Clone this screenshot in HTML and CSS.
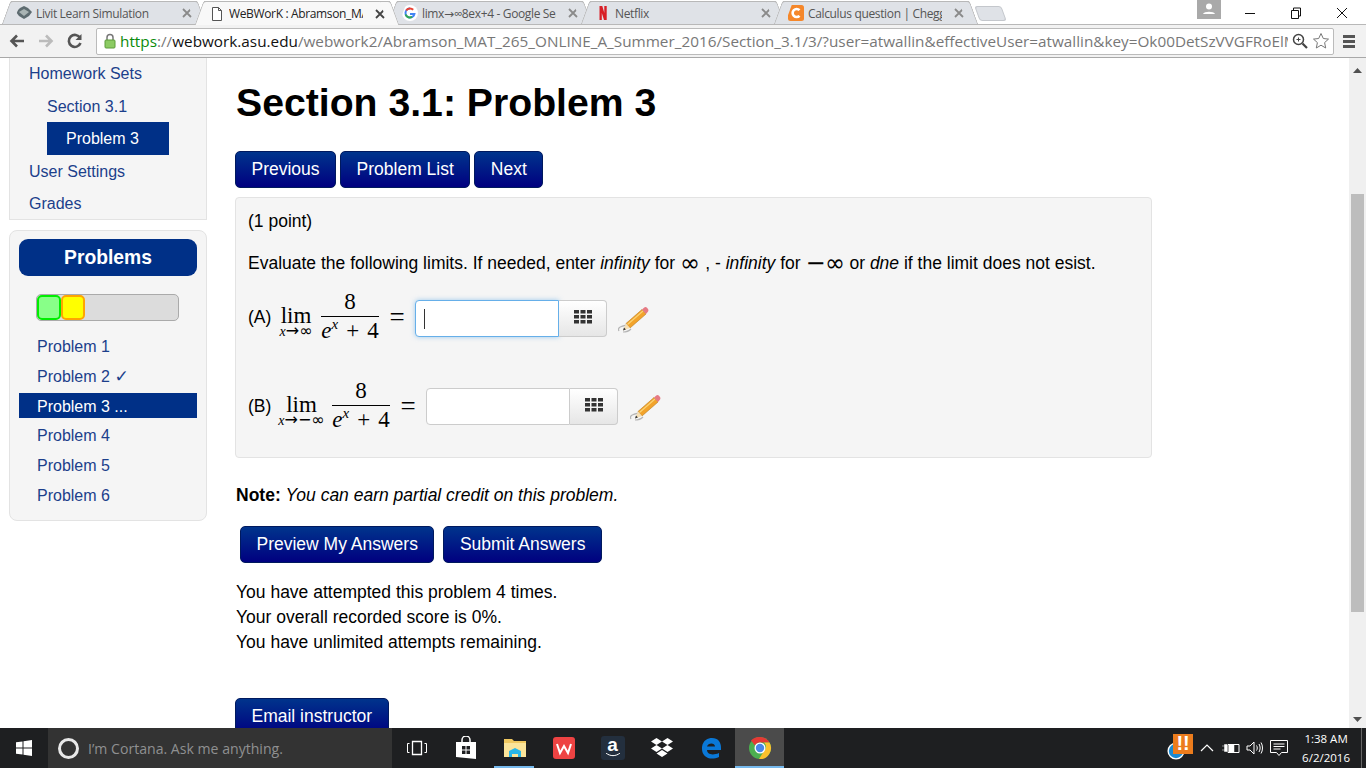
FILE: index.html
```html
<!DOCTYPE html>
<html>
<head>
  <meta charset="UTF-8">
  <title>WeBWorK : Abramson_MAT_265</title>
  <link rel="stylesheet" href="styles.css">
</head>
<body>
  <div class="tabbar">
    <div class="tab">
      <svg class="favicon" viewBox="0 0 16 16"><path d="M0 7l4-4 4-2 4 2 4 4-3 4-5 3-5-3z" fill="#5d6b70"/><path d="M3 7l5-3 5 3-5 4z" fill="#a9b4b4"/></svg>
      <span class="tab-title">Livit Learn Simulation</span><svg class="tab-x" viewBox="0 0 10 10"><path d="M1 1l8 8M9 1L1 9" stroke="#8a8a8a" stroke-width="1.800"/></svg>
    </div>
    <div class="tab tab-active">
      <svg class="favicon" viewBox="0 0 16 16"><path d="M3.500 1.500h6l3 3v10h-9z" fill="#fff" stroke="#555"/><path d="M9.500 1.500v3h3" fill="none" stroke="#555"/></svg>
      <span class="tab-title">WeBWorK : Abramson_MAT_265</span><svg class="tab-x" viewBox="0 0 10 10"><path d="M1 1l8 8M9 1L1 9" stroke="#444" stroke-width="1.800"/></svg>
    </div>
    <div class="tab">
      <svg class="favicon" viewBox="0 0 16 16"><circle cx="8" cy="8" r="8" fill="#fff"/><path d="M8 3.500a4.500 4.500 0 1 0 4.400 5.500H8" fill="none" stroke="#4285f4" stroke-width="2"/><path d="M4.200 5.500A4.500 4.500 0 0 1 11.200 4.800" fill="none" stroke="#ea4335" stroke-width="2"/><path d="M3.600 9.500a4.500 4.500 0 0 0 6.500 2.400" fill="none" stroke="#34a853" stroke-width="2"/></svg>
      <span class="tab-title">limx→∞8ex+4 - Google Search</span><svg class="tab-x" viewBox="0 0 10 10"><path d="M1 1l8 8M9 1L1 9" stroke="#8a8a8a" stroke-width="1.800"/></svg>
    </div>
    <div class="tab">
      <svg class="favicon" viewBox="0 0 16 16"><path d="M4.500 1h2.800l2 7V1h2.400v14H9l-2.200-7v7H4.500z" fill="#d81f26"/></svg>
      <span class="tab-title">Netflix</span><svg class="tab-x" viewBox="0 0 10 10"><path d="M1 1l8 8M9 1L1 9" stroke="#8a8a8a" stroke-width="1.800"/></svg>
    </div>
    <div class="tab">
      <svg class="favicon" viewBox="0 0 16 16"><rect width="16" height="16" rx="2.500" fill="#f5872a"/><path d="M11.500 5.200A4 4 0 1 0 11.500 10.800" fill="none" stroke="#fff" stroke-width="2.600"/></svg>
      <span class="tab-title">Calculus question | Chegg.com</span><svg class="tab-x" viewBox="0 0 10 10"><path d="M1 1l8 8M9 1L1 9" stroke="#8a8a8a" stroke-width="1.800"/></svg>
    </div>
    <div class="tab-new"></div>
    <div class="win-controls">
      <div class="profile"><svg viewBox="0 0 18 18" width="18" height="18"><circle cx="9" cy="5.500" r="3" fill="#fff"/><path d="M3 13c1-3 11-3 12 0z" fill="#fff"/></svg></div>
      <svg class="win-btn" viewBox="0 0 46 20"><path d="M18 10.500h10" stroke="#111"/></svg>
      <svg class="win-btn" viewBox="0 0 46 20"><path d="M18.500 7.500h7v8h-7zM20.500 7.500v-2.500h7v8h-2" fill="none" stroke="#111"/></svg>
      <svg class="win-btn" viewBox="0 0 46 20"><path d="M18 5l10 10M28 5L18 15" stroke="#111"/></svg>
    </div>
  </div>

  <div class="toolbar">
    <svg class="nav-icon" viewBox="0 0 18 18"><path d="M16 9H4M9 3.500L3.500 9 9 14.500" fill="none" stroke="#555" stroke-width="2.600"/></svg>
    <svg class="nav-icon" viewBox="0 0 18 18"><path d="M2 9h12M9 3.500L14.500 9 9 14.500" fill="none" stroke="#bbb" stroke-width="2.600"/></svg>
    <svg class="nav-icon" viewBox="0 0 18 18"><path d="M14.500 11a6 6 0 1 1-.4-5" fill="none" stroke="#555" stroke-width="2.600"/><path d="M15.500 2v6h-6z" fill="#555"/></svg>
    <div class="omnibox">
      <svg class="lock" viewBox="0 0 12 16"><path d="M3 7V4.500a3 3 0 0 1 6 0V7" fill="none" stroke="#777" stroke-width="1.500"/><rect x="1" y="7" width="10" height="8" rx="1" fill="#8ccb63" stroke="#5c9c3a"/></svg>
      <div class="url"><span class="url-https">https</span><span class="url-dim">://</span><span class="url-host">webwork.asu.edu</span><span class="url-dim">/webwork2/Abramson_MAT_265_ONLINE_A_Summer_2016/Section_3.1/3/?user=atwallin&amp;effectiveUser=atwallin&amp;key=Ok00DetSzVVGFRoElMnPq</span></div>
      <svg class="omni-icon" viewBox="0 0 18 18"><circle cx="7.500" cy="7.500" r="5" fill="none" stroke="#444" stroke-width="1.500"/><path d="M11.500 11.500L16 16" stroke="#444" stroke-width="2.200"/><path d="M5.500 7.500h4M7.500 5.500v4" stroke="#444"/></svg>
      <svg class="omni-icon" viewBox="0 0 18 18"><path d="M9 1.500l2.300 5 5.200.6-3.900 3.500 1.100 5.400L9 13.200 4.300 16l1.100-5.400L1.500 7.100l5.200-.6z" fill="none" stroke="#777"/></svg>
    </div>
    <div class="menu-icon"><i></i><i></i><i></i></div>
  </div>

  <div class="viewport">
    <div class="page">
      <div class="sidebar">
        <ul class="site-nav">
          <li><a>Homework Sets</a></li>
          <li class="sub"><a>Section 3.1</a></li>
          <li class="sub current"><a>Problem 3</a></li>
          <li><a>User Settings</a></li>
          <li><a>Grades</a></li>
        </ul>
        <div class="problems">
          <div class="problems-title">Problems</div>
          <div class="progress"><div class="seg seg-green"></div><div class="seg seg-yellow"></div></div>
          <ul class="problem-list">
            <li>Problem 1</li>
            <li>Problem 2 <span class="check">✓</span></li>
            <li class="active">Problem 3 ...</li>
            <li>Problem 4</li>
            <li>Problem 5</li>
            <li>Problem 6</li>
          </ul>
        </div>
      </div>

      <div class="content">
        <h1>Section 3.1: Problem 3</h1>
        <div class="btn-row">
          <a class="btn">Previous</a>
          <a class="btn">Problem List</a>
          <a class="btn">Next</a>
        </div>
        <div class="well">
          <p class="point">(1 point)</p>
          <p class="intro">Evaluate the following limits. If needed, enter <em>infinity</em> for <span class="sym sym-one">∞</span> , - <em>infinity</em> for <span class="sym">−∞</span> or <em>dne</em> if the limit does not esist.</p>
          <div class="eq eq-a">
            <span class="eq-label">(A)</span>
            <span class="lim"><span class="lim-top">lim</span><span class="lim-sub"><i>x</i><span class="sub-sym">→∞</span></span></span>
            <span class="frac"><span class="num">8</span><span class="den"><i>e</i><sup><i>x</i></sup><span class="plus">+</span>4</span></span>
            <span class="equals">=</span>
            <span class="answer focused"><span class="input"><span class="caret"></span></span><span class="keypad"><svg viewBox="0 0 18 14" width="18" height="14"><path d="M0 0h5v3.500H0zM6.500 0h5v3.500h-5zM13 0h5v3.500h-5zM0 5h5v3.500H0zM6.500 5h5v3.500h-5zM13 5h5v3.500h-5zM0 10h5v3.500H0zM6.500 10h5v3.500h-5zM13 10h5v3.500h-5z" fill="#333"/></svg></span></span>
            <svg class="pencil" viewBox="0 0 31 28"><path d="M1 26c-2-3 2-5 7-6M2 22c5-2 9-2 13-4M5 27c3 0 6-1 8-3" fill="none" stroke="#b5b5b5" stroke-width="1.200"/><path d="M8 18.500L24 4.500l4 4.500L12 23z" fill="#f2a32b" stroke="#b97a1c" stroke-width=".6"/><path d="M9.500 19.500L25 6" stroke="#fbd373" stroke-width="1.200"/><path d="M24 4.500l2-1.800c1-.9 2.300-.7 3 .1l1 1.200c.7.800.6 2.100-.3 3L28 9z" fill="#e67a84"/><path d="M8 18.500l4 4.500-7 2.500z" fill="#f6dfb5"/><path d="M5 25.500l1-3 1.900 2z" fill="#333"/></svg>
          </div>
          <div class="eq eq-b">
            <span class="eq-label">(B)</span>
            <span class="lim lim-wide"><span class="lim-top">lim</span><span class="lim-sub"><i>x</i><span class="sub-sym">→−∞</span></span></span>
            <span class="frac"><span class="num">8</span><span class="den"><i>e</i><sup><i>x</i></sup><span class="plus">+</span>4</span></span>
            <span class="equals">=</span>
            <span class="answer"><span class="input"></span><span class="keypad"><svg viewBox="0 0 18 14" width="18" height="14"><path d="M0 0h5v3.500H0zM6.500 0h5v3.500h-5zM13 0h5v3.500h-5zM0 5h5v3.500H0zM6.500 5h5v3.500h-5zM13 5h5v3.500h-5zM0 10h5v3.500H0zM6.500 10h5v3.500h-5zM13 10h5v3.500h-5z" fill="#333"/></svg></span></span>
            <svg class="pencil" viewBox="0 0 31 28"><path d="M1 26c-2-3 2-5 7-6M2 22c5-2 9-2 13-4M5 27c3 0 6-1 8-3" fill="none" stroke="#b5b5b5" stroke-width="1.200"/><path d="M8 18.500L24 4.500l4 4.500L12 23z" fill="#f2a32b" stroke="#b97a1c" stroke-width=".6"/><path d="M9.500 19.500L25 6" stroke="#fbd373" stroke-width="1.200"/><path d="M24 4.500l2-1.800c1-.9 2.300-.7 3 .1l1 1.200c.7.800.6 2.100-.3 3L28 9z" fill="#e67a84"/><path d="M8 18.500l4 4.500-7 2.500z" fill="#f6dfb5"/><path d="M5 25.500l1-3 1.900 2z" fill="#333"/></svg>
          </div>
        </div>
        <p class="note"><b>Note:</b> <em>You can earn partial credit on this problem.</em></p>
        <div class="submit-row">
          <a class="btn btn-submit">Preview My Answers</a>
          <a class="btn btn-submit">Submit Answers</a>
        </div>
        <p class="attempts">You have attempted this problem 4 times.<br>Your overall recorded score is 0%.<br>You have unlimited attempts remaining.</p>
        <a class="btn btn-email">Email instructor</a>
      </div>
    </div>
    <div class="scrollbar">
      <div class="sb-arrow sb-up"><svg viewBox="0 0 9 5" width="9" height="5"><path d="M4.500 0L9 5H0z" fill="#505050"/></svg></div>
      <div class="sb-track"><div class="sb-thumb"></div></div>
      <div class="sb-arrow"><svg viewBox="0 0 9 5" width="9" height="5"><path d="M0 0h9L4.500 5z" fill="#505050"/></svg></div>
    </div>
  </div>

  <div class="taskbar">
    <div class="start"><svg viewBox="0 0 16 16" width="16" height="16"><path d="M0 2.300L6.500 1.400V7.500H0zM7.500 1.300L16 0v7.500H7.500zM0 8.500h6.500v6.100L0 13.700zM7.500 8.500H16V16l-8.500-1.300z" fill="#fff"/></svg></div>
    <div class="search"><span class="cortana"></span><span>I’m Cortana. Ask me anything.</span></div>
    <div class="task-icon"><svg viewBox="0 0 22 16" width="22" height="16"><path d="M6.500 1.500h9v13h-9z" fill="none" stroke="#fff" stroke-width="1.300"/><path d="M3.500 3.500h-2v9h2M18.500 3.500h2v9h-2" fill="none" stroke="#fff"/></svg></div>
    <div class="task-icon"><svg viewBox="0 0 22 24" width="22" height="24"><path d="M7 6V4a4 4 0 0 1 8 0v2" fill="none" stroke="#fff" stroke-width="1.500"/><path d="M1 6h20v17L1 21z" fill="#fff"/><path d="M7 10h3.500v3.500H7zM11.500 10H15v3.500h-3.500zM7 14.500h3.500V18H7zM11.500 14.500H15V18h-3.500z" fill="#1e1f21"/></svg></div>
    <div class="task-icon running"><svg viewBox="0 0 22 20" width="22" height="20"><path d="M0 1h8l2 2h12v16H0z" fill="#f0c860"/><path d="M0 5h22v14H0z" fill="#fbe49a"/><path d="M5 19v-6l6-3 6 3v6h-3v-3H8v3z" fill="#29b6e8"/></svg></div>
    <div class="task-icon"><svg viewBox="0 0 22 22" width="22" height="22"><rect width="22" height="22" rx="3" fill="#ee4343"/><path d="M4 7l3 9 4-7 4 7 3-9" fill="none" stroke="#fff" stroke-width="2"/></svg></div>
    <div class="task-icon"><div class="amazon">a<svg viewBox="0 0 16 4" width="16" height="4"><path d="M1 0c4 3.500 10 3.500 14 0" fill="none" stroke="#fff"/></svg></div></div>
    <div class="task-icon"><svg viewBox="0 0 24 22" width="24" height="22"><path d="M6.500 1L12 4.500 6.500 8 1 4.500zM17.500 1L23 4.500 17.500 8 12 4.500zM6.500 8L12 11.500 6.500 15 1 11.500zM17.500 8L23 11.500 17.500 15 12 11.500zM12 13l5.500 3.500L12 20l-5.500-3.500z" fill="#fff"/></svg></div>
    <div class="task-icon"><svg viewBox="0 0 22 22" width="22" height="22"><path d="M2 10C3 3 8 1 12 1c6 0 9 4 9 10v2H7c0 4 5 6 12 3v4c-9 4-17 0-17-8v-2zm5-.500h8c0-4-7-4-8 0z" fill="#0a78d7"/></svg></div>
    <div class="task-icon running active"><svg viewBox="0 0 24 24" width="24" height="24"><circle cx="12" cy="12" r="11" fill="#4caf50"/><path d="M12 1a11 11 0 0 1 9.500 5.500H12a5.500 5.500 0 0 0-5 3L3 4.500A11 11 0 0 1 12 1z" fill="#e53935"/><path d="M21.500 6.500A11 11 0 0 1 11 23l5-8a5.500 5.500 0 0 0 0-8.500z" fill="#fbc02d"/><circle cx="12" cy="12" r="5.500" fill="#fff"/><circle cx="12" cy="12" r="4.200" fill="#4a86e8"/></svg></div>
    <div class="tray">
      <div class="tray-alert">
        <svg viewBox="0 0 20 20" width="18" height="18"><circle cx="10" cy="10" r="9.500" fill="#fff"/><circle cx="10" cy="10" r="8" fill="#1a8ad4"/><circle cx="10" cy="10" r="2" fill="#fff"/></svg>
        <span class="alert-badge">!!</span>
      </div>
      <svg class="tray-chevron" viewBox="0 0 14 8" width="14" height="8"><path d="M1 7l6-6 6 6" fill="none" stroke="#fff" stroke-width="1.200"/></svg>
      <svg viewBox="0 0 18 12" width="18" height="12"><path d="M6 2.500h11v8H6z" fill="none" stroke="#fff"/><path d="M7 3h5v7H7zM0 4h3M0 8h3M2.500 2.500h2.500v7H2.500z" fill="#fff" stroke="#fff" stroke-width=".5"/></svg>
      <svg viewBox="0 0 17 14" width="17" height="14"><path d="M1 5h3l4-4v12L4 9H1z" fill="none" stroke="#fff"/><path d="M10.500 4.500c1 1.500 1 3.500 0 5M13 3c1.500 2.500 1.500 5.500 0 8M15 1.500c2 3 2 8 0 11" fill="none" stroke="#fff"/></svg>
      <svg viewBox="0 0 20 18" width="20" height="18"><path d="M1.500 1.500h17v12h-6l-2.500 3-2.500-3h-6z" fill="none" stroke="#fff"/><path d="M4.500 5h11M4.500 7.500h11M4.500 10h7" stroke="#fff"/></svg>
      <div class="clock"><div>1:38 AM</div><div>6/2/2016</div></div>
      <div class="show-desktop"></div>
    </div>
  </div>
</body>
</html>
```

FILE: styles.css
```css
* {
  box-sizing: border-box;
}
html, body {
  margin: 0;
  height: 100%;
  overflow: hidden;
}
body {
  display: flex;
  flex-direction: column;
  width: 1366px;
  height: 768px;
  font-family: "Liberation Sans", Arial, sans-serif;
  font-size: 17.500px;
  color: #000;
  background: #fff;
}
ul {
  list-style: none;
  margin: 0;
  padding: 0;
}

/* browser chrome */
.tabbar {
  display: flex;
  align-items: flex-end;
  height: 25px;
  flex: none;
  padding-left: 11px;
  background: #fff;
  border-bottom: 1px solid #b8b8b8;
}
.tab {
  position: relative;
  display: flex;
  align-items: center;
  gap: 4px;
  width: 186px;
  height: 23px;
  margin-right: 7px;
  padding: 0 3px 0 5px;
  font-family: "Open Sans", "DejaVu Sans", sans-serif;
  font-size: 12px;
  letter-spacing: -0.35px;
  color: #555;
  background: #dfe2e7;
  border-top: 1px solid #b8b8b8;
}
.tab::before, .tab::after {
  content: "";
  position: absolute;
  top: -1px;
  bottom: 0;
  width: 10px;
  background: inherit;
  border-top: 1px solid #b8b8b8;
}
.tab::before {
  left: -5px;
  transform: skewX(-20deg);
  border-left: 1px solid #b8b8b8;
  border-top-left-radius: 3px;
}
.tab::after {
  right: -5px;
  transform: skewX(20deg);
  border-right: 1px solid #b8b8b8;
  border-top-right-radius: 3px;
}
.tab-active {
  z-index: 2;
  height: 24px;
  margin-bottom: -1px;
  color: #222;
  background: #f8f8f8;
}
.favicon {
  width: 16px;
  height: 16px;
  flex: none;
}
.tab-title {
  flex: 1;
  min-width: 0;
  margin-right: 8px;
  overflow: hidden;
  white-space: nowrap;
}
.tab-x {
  flex: none;
  width: 10px;
  height: 10px;
  margin-right: 2px;
}
.tab-new {
  width: 27px;
  height: 15px;
  margin: 0 0 3px 1px;
  background: #dfe2e7;
  border: 1px solid #c4c7cc;
  border-radius: 3px;
  transform: skewX(20deg);
}
.win-controls {
  display: flex;
  align-self: flex-start;
  margin-left: auto;
  padding-right: 1px;
}
.profile {
  display: flex;
  align-items: center;
  justify-content: center;
  width: 24px;
  height: 19px;
  margin-right: 6px;
  background: #a9a9a9;
}
.win-btn {
  width: 46px;
  height: 26px;
}

.toolbar {
  display: flex;
  align-items: center;
  height: 33px;
  flex: none;
  padding: 0 8px;
  background: #f2f2f2;
  border-bottom: 1px solid #a8a8a8;
}
.nav-icon {
  width: 18px;
  height: 18px;
  margin-right: 11px;
}
.omnibox {
  display: flex;
  align-items: center;
  width: 1238px;
  height: 27px;
  margin-left: 1px;
  padding: 0 3px 0 7px;
  background: #fff;
  border: 1px solid #bbb;
  border-radius: 2px;
}
.lock {
  width: 12px;
  height: 16px;
  flex: none;
  margin-right: 4px;
}
.url {
  flex: 1;
  min-width: 0;
  overflow: hidden;
  white-space: nowrap;
  font-family: "Open Sans", sans-serif;
  font-size: 15.300px;
  color: #777;
}
.url-https {
  color: #0a8a0a;
}
.url-host {
  color: #111;
}
.omni-icon {
  width: 18px;
  height: 18px;
  flex: none;
  margin-left: 3px;
}
.menu-icon {
  display: flex;
  flex-direction: column;
  gap: 2px;
  width: 12px;
  margin-left: 9px;
}
.menu-icon i {
  height: 3px;
  background: #555;
}

/* page */
.viewport {
  display: flex;
  flex: 1;
  min-height: 0;
}
.page {
  display: flex;
  flex: 1;
  min-width: 0;
  padding-left: 9px;
  overflow: hidden;
}
.sidebar {
  width: 198px;
  flex: none;
  margin-right: 28px;
  font-size: 16px;
}
.site-nav {
  height: 162px;
  padding: 0 0 0 19px;
  background: #f5f5f5;
  border: 1px solid #e3e3e3;
  border-top: 0;
}
.site-nav li {
  height: 32px;
  line-height: 34px;
  color: #1c3f8b;
}
.site-nav li:first-child {
  line-height: 31px;
}
.site-nav .sub {
  margin-left: 18px;
}
.site-nav li.sub.current {
  width: 122px;
  height: 33px;
  padding-left: 19px;
  line-height: 33px;
  color: #fff;
  background: #003087;
}
.problems {
  height: 291px;
  margin-top: 10px;
  padding: 8px 9px;
  background: #f5f5f5;
  border: 1px solid #e3e3e3;
  border-radius: 8px;
}
.problems-title {
  height: 37px;
  line-height: 38px;
  text-align: center;
  font-size: 19.300px;
  font-weight: bold;
  color: #fff;
  background: #003087;
  border-radius: 9px;
}
.progress {
  display: flex;
  width: 143px;
  height: 27px;
  margin: 18px 0 0 17px;
  background: #dcdcdc;
  border: 1px solid #aaa;
  border-radius: 5px;
}
.seg {
  width: 24px;
  border-radius: 5px;
  border: 2px solid;
}
.seg-green {
  background: #88ff88;
  border-color: #00ee00;
}
.seg-yellow {
  background: #ffff00;
  border-color: #ffa500;
}
.problem-list {
  margin-top: 10px;
}
.problem-list li {
  height: 30px;
  line-height: 32px;
  padding-left: 18px;
  color: #1c3f8b;
}
.problem-list li.active {
  height: 25px;
  margin: 2px 0;
  line-height: 27px;
  color: #fff;
  background: #003087;
}
.check {
  font-family: "DejaVu Sans", sans-serif;
  font-size: 17px;
  line-height: 0;
}

.content {
  width: 917px;
  flex: none;
}
h1 {
  margin: 21px 0 25px 1px;
  font-size: 39.200px;
  line-height: 47px;
}
.btn {
  display: inline-block;
  height: 37px;
  padding: 0 15.500px;
  line-height: 35px;
  font-size: 17.500px;
  color: #fff;
  white-space: nowrap;
  background: linear-gradient(#00348c, #000080);
  border: 1px solid #00195e;
  border-radius: 5px;
}
.btn-row {
  display: flex;
  gap: 4px;
  height: 37px;
}
.well {
  height: 261px;
  margin-top: 9px;
  padding: 12px 12px 0;
  background: #f5f5f5;
  border: 1px solid #e3e3e3;
  border-radius: 4px;
}
.well p {
  margin: 0;
}
.point {
  line-height: 22px;
}
.well .intro {
  margin-top: 20px;
  line-height: 22px;
}
.sym {
  font-family: "DejaVu Sans", sans-serif;
  font-size: 24px;
  line-height: 0;
  letter-spacing: -0.500px;
  vertical-align: -2px;
}
.sym-one {
  letter-spacing: 0.500px;
}
.eq {
  display: flex;
  align-items: center;
  height: 48px;
}
.eq-a {
  margin-top: 19px;
}
.eq-b {
  margin-top: 41px;
}
.eq-label {
  width: 29px;
  flex: none;
  padding-top: 1px;
}
.lim {
  display: inline-flex;
  flex-direction: column;
  align-items: center;
  width: 38px;
  flex: none;
  margin-top: 13px;
  font-family: "Liberation Serif", serif;
}
.lim-wide {
  width: 49px;
}
.lim-top {
  font-size: 23px;
  line-height: 16px;
}
.lim-sub {
  font-size: 14px;
  line-height: 15px;
  white-space: nowrap;
}
.sub-sym {
  font-family: "DejaVu Sans", sans-serif;
  font-size: 16px;
  line-height: 0;
}
.frac {
  display: inline-flex;
  flex-direction: column;
  align-items: center;
  margin-left: 6px;
  width: 58px;
  flex: none;
  font-family: "Liberation Serif", serif;
  font-size: 23px;
}
.num {
  width: 100%;
  height: 24px;
  line-height: 18px;
  text-align: center;
  border-bottom: 1px solid #000;
}
.den {
  height: 24px;
  line-height: 27px;
  white-space: nowrap;
}
.den sup {
  font-size: 15px;
  line-height: 0;
}
.plus {
  margin: 0 8px;
}
.equals {
  width: 36px;
  flex: none;
  text-align: center;
  font-family: "Liberation Serif", serif;
  font-size: 27px;
}
.answer {
  display: flex;
  width: 192px;
  height: 37px;
  flex: none;
  margin-top: 3px;
}
.input {
  display: flex;
  align-items: center;
  width: 144px;
  flex: none;
  padding-left: 8px;
  background: #fff;
  border: 1px solid #ccc;
  border-radius: 4px 0 0 4px;
}
.focused .input {
  border-color: #66afe9;
  box-shadow: 0 0 5px rgba(102, 175, 233, .6);
}
.caret {
  width: 1px;
  height: 20px;
  background: #333;
}
.keypad {
  display: flex;
  align-items: center;
  justify-content: center;
  flex: 1;
  padding-bottom: 3px;
  background: linear-gradient(#fff, #e6e6e6);
  border: 1px solid #ccc;
  border-left: 0;
  border-radius: 0 4px 4px 0;
}
.pencil {
  width: 31px;
  height: 28px;
  flex: none;
  margin: 3px 0 0 11px;
}
.eq-b .answer {
  margin-top: 1px;
}
.eq-b .pencil {
  margin: 1px 0 0 12px;
}
.note {
  margin: 27px 0 0 1px;
  line-height: 20px;
}
.submit-row {
  display: flex;
  gap: 9px;
  margin: 21px 0 0 5px;
}
.attempts {
  margin: 17px 0 0 1px;
  line-height: 25px;
}
.btn-email {
  margin-top: 43px;
}

.scrollbar {
  display: flex;
  flex-direction: column;
  width: 17px;
  flex: none;
  background: #f0f0f0;
}
.sb-arrow {
  display: flex;
  align-items: center;
  justify-content: center;
  height: 17px;
  flex: none;
}
.sb-up {
  padding-top: 7px;
}
.sb-track {
  flex: 1;
  padding: 119px 2px 99px;
}
.sb-thumb {
  height: 100%;
  background: #bdbdbd;
}

/* windows taskbar */
.taskbar {
  display: flex;
  align-items: center;
  height: 40px;
  flex: none;
  color: #fff;
  background: #1e1f21;
}
.start {
  display: flex;
  align-items: center;
  justify-content: center;
  width: 48px;
  height: 40px;
}
.search {
  display: flex;
  align-items: center;
  gap: 9px;
  width: 344px;
  height: 40px;
  padding-left: 10px;
  font-family: "Open Sans", sans-serif;
  font-size: 14.100px;
  color: #8f9091;
  background: #333;
}
.cortana {
  width: 21px;
  height: 21px;
  border: 3px solid #e8e8e8;
  border-radius: 50%;
}
.task-icon {
  position: relative;
  display: flex;
  align-items: center;
  justify-content: center;
  width: 49px;
  height: 40px;
}
.task-icon.running::after {
  content: "";
  position: absolute;
  left: 4px;
  right: 5px;
  bottom: 0;
  height: 2px;
  background: #76b9ed;
}
.task-icon.active {
  background: #4b4b4b;
}
.task-icon.active::after {
  left: 0;
  right: 0;
}
.amazon {
  display: flex;
  flex-direction: column;
  align-items: center;
  width: 24px;
  height: 24px;
  font-size: 19px;
  line-height: 17px;
  font-weight: bold;
  background: #232f3e;
  border-radius: 3px;
}
.tray {
  display: flex;
  align-items: center;
  gap: 6px;
  margin-left: auto;
}
.tray-alert {
  position: relative;
  display: flex;
  margin-right: 9px;
  padding-top: 6px;
}
.alert-badge {
  position: absolute;
  top: -2px;
  left: 6px;
  width: 20px;
  height: 20px;
  line-height: 19px;
  text-align: center;
  font-weight: bold;
  font-size: 20px;
  background: #ec7c1d;
}
.tray-chevron {
  margin-right: 2px;
}
.clock {
  margin-left: 7px;
  text-align: center;
  font-family: "Open Sans", sans-serif;
  font-size: 11.500px;
  line-height: 19px;
}
.show-desktop {
  width: 1px;
  height: 40px;
  margin: 0 4px 0 5px;
  background: #666;
}
```
